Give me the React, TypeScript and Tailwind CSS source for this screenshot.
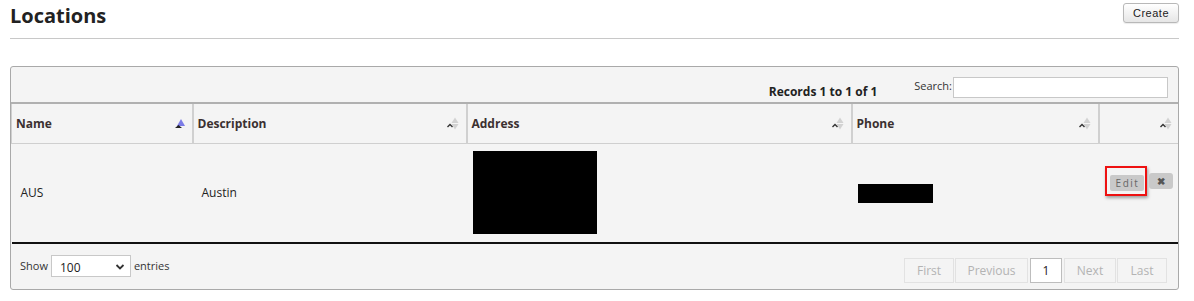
import React from 'react';

const font = { fontFamily: '"Open Sans", "Noto Sans", sans-serif' };

function SortAsc() {
  return (
    <svg width="14" height="14" viewBox="0 0 14 14" className="shrink-0">
      <polygon points="9,2 13,9 5,9" fill="#7c7ce6" />
      <polygon points="3,11 10,11 6.5,8" fill="#222" />
    </svg>
  );
}

function SortBoth() {
  return (
    <svg width="14" height="16" viewBox="0 0 14 16" className="shrink-0">
      <polygon points="9,1.5 12.5,7 5.5,7" fill="#d2d2d2" />
      <polygon points="9,13.5 12.5,8 5.5,8" fill="#d2d2d2" />
      <polyline points="1.5,11 4,8.5 6.5,11" fill="none" stroke="#333" strokeWidth="1.4" />
    </svg>
  );
}

const columns = [
  { label: 'Name', width: 'w-[181px]', sorted: true },
  { label: 'Description', width: 'w-[274px]', sorted: false },
  { label: 'Address', width: 'w-[385px]', sorted: false },
  { label: 'Phone', width: 'w-[247px]', sorted: false },
  { label: '', width: 'w-[80px]', sorted: false },
];

const pages = [
  { label: 'First', width: 'w-[50px]' },
  { label: 'Previous', width: 'w-[73px]' },
  { label: '1', width: 'w-[32px]' },
  { label: 'Next', width: 'w-[52px]' },
  { label: 'Last', width: 'w-[50px]' },
];

export default function App() {
  return (
    <div className="w-[1194px] h-[301px] bg-white px-[10px] pt-[3px]" style={font}>
      {/* page header */}
      <div className="flex items-start justify-between w-[1169px]">
        <h1 className="text-[20px] font-bold text-[#222] leading-[28px] -mt-[1px]">Locations</h1>
        <button
          className="h-[20px] w-[56px] rounded-[3px] border border-[#b8b8b8] bg-gradient-to-b from-white to-[#e6e6e6] text-[11px] text-[#222] tracking-[0.5px] shadow-[0_1px_1px_rgba(0,0,0,0.08)]"
          style={{ fontFamily: '"Liberation Sans", Arial, sans-serif' }}
        >
          Create
        </button>
      </div>
      <div className="w-[1169px] h-px bg-[#c8c8c8] mt-[8px]" />

      {/* data panel */}
      <div className="mt-[27px] w-[1169px] border border-[#a9a9a9] rounded-[3px] bg-[#f4f4f4] overflow-hidden">
        {/* toolbar */}
        <div className="h-[37px] flex items-start justify-end border-b-2 border-[#b0b0b0] pr-[10px]">
          <span className="text-[12px] font-bold text-[#222] mt-[16px] mr-[37px]">Records 1 to 1 of 1</span>
          <label className="flex items-center mt-[10px] text-[11px] text-[#333]">
            <span className="-mt-[3px]">Search:</span>
            <input className="ml-[1px] w-[215px] h-[21px] border border-[#c8c8c8] bg-white outline-none" />
          </label>
        </div>

        <table className="w-full border-collapse table-fixed">
          <thead>
            <tr className="h-[39px]">
              {columns.map((c, i) => (
                <th
                  key={i}
                  className={`${c.width} border-b border-[#cfcfcf] ${i < columns.length - 1 ? 'border-r-2 border-r-[#d0d0d0]' : ''} ${i === 0 ? 'border-l border-l-[#cfcfcf]' : ''} pl-[4px] pr-[6px] text-left align-middle`}
                >
                  <div className="flex items-center justify-between pt-[1px]">
                    <span className="text-[12px] font-bold text-[#3b3030]">{c.label}</span>
                    {c.sorted ? <SortAsc /> : <SortBoth />}
                  </div>
                </th>
              ))}
            </tr>
          </thead>
          <tbody>
            <tr className="h-[100px] border-b-2 border-[#111]">
              <td className="pl-[9px] text-[12px] text-[#222]">AUS</td>
              <td className="pl-[9px] text-[12px] text-[#222]">Austin</td>
              <td className="pl-[6px]">
                <div className="w-[124px] h-[83px] bg-black" />
              </td>
              <td className="pl-[6px]">
                <div className="w-[75px] h-[19px] bg-black mt-[2px]" />
              </td>
              <td className="align-top pt-[22px]">
                <div className="flex items-center gap-[2px] ml-[6px]">
                  <div className="border-2 border-[#ee1111] p-[1px] pl-[3px] shadow-[1px_2px_3px_rgba(0,0,0,0.35)]">
                    <button className="h-[16px] w-[34px] rounded-[2px] bg-[#c9c9c9] text-[10px] leading-[16px] text-[#666] tracking-[1.5px] pl-[2px]">
                      Edit
                    </button>
                  </div>
                  <button className="h-[16px] w-[24px] rounded-[3px] bg-[#c9c9c9] text-[10px] leading-[16px] text-[#555] font-bold">
                    ✖
                  </button>
                </div>
              </td>
            </tr>
          </tbody>
        </table>

        {/* footer */}
        <div className="h-[45px] flex items-start justify-between pl-[9px] pr-[11px]">
          <div className="flex items-center mt-[11px] text-[11px] text-[#333]">
            <span>Show</span>
            <div className="relative ml-[3px] mr-[3px] w-[80px] h-[22px] border border-[#c8c8c8] bg-white">
              <span className="absolute left-[8px] top-[3px] text-[12px] text-[#222]">100</span>
              <svg width="10" height="8" viewBox="0 0 10 8" className="absolute right-[5px] top-[7px]">
                <polyline points="1.5,2 5,5.5 8.5,2" fill="none" stroke="#333" strokeWidth="1.8" />
              </svg>
            </div>
            <span>entries</span>
          </div>
          <div className="flex items-center gap-[1px] mt-[14px]">
            {pages.map((p) => (
              <div
                key={p.label}
                className={`${p.width} h-[25px] flex items-center justify-center border text-[12px] ${
                  p.label === '1'
                    ? 'border-[#bdbdbd] bg-white text-[#222] mx-[1px]'
                    : 'border-[#e2e2e2] text-[#b3b3b3]'
                }`}
              >
                {p.label}
              </div>
            ))}
          </div>
        </div>
      </div>
    </div>
  );
}
